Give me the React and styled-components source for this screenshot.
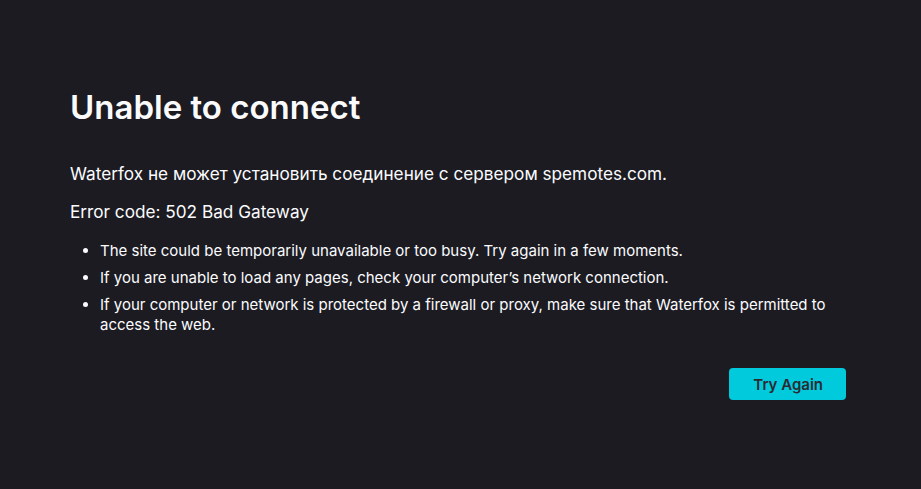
import styled, { createGlobalStyle } from 'styled-components';

const GlobalStyle = createGlobalStyle`
  html, body {
    margin: 0;
    padding: 0;
    background: #1c1b22;
    color: #fbfbfe;
    font-family: Inter, "Noto Sans", sans-serif;
  }
`;

const Page = styled.main`
  min-height: 489px;
  box-sizing: border-box;
  padding: 87px 0 0 70px;
`;

const Container = styled.div`
  width: 776px;
`;

const Title = styled.h1`
  margin: 0 0 35px;
  font-size: 33px;
  font-weight: 600;
  line-height: 40px;
`;

const Text = styled.p`
  margin: 0 0 ${(p) => p.gap || 14}px;
  font-size: 17.2px;
  line-height: 24px;
`;

const List = styled.ul`
  margin: 0;
  padding: 0 0 0 30px;
`;

const Item = styled.li`
  font-size: 15px;
  line-height: 20px;
  margin-bottom: 7px;
`;

const Actions = styled.div`
  display: flex;
  justify-content: flex-end;
  margin-top: 33px;
`;

const Button = styled.button`
  height: 32px;
  padding: 0 23px 0 24px;
  border: none;
  border-radius: 4px;
  background: #00cadb;
  color: #2b2a33;
  font-family: Inter, sans-serif;
  font-size: 15px;
  font-weight: 600;
`;

export default function App() {
  return (
    <>
      <GlobalStyle />
      <Page>
        <Container>
          <Title>Unable to connect</Title>
          <Text>Waterfox не может установить соединение с сервером spemotes.com.</Text>
          <Text gap={17}>Error code: 502 Bad Gateway</Text>
          <List>
            <Item>The site could be temporarily unavailable or too busy. Try again in a few moments.</Item>
            <Item>If you are unable to load any pages, check your computer’s network connection.</Item>
            <Item>
              If your computer or network is protected by a firewall or proxy, make sure that Waterfox is permitted to
              access the web.
            </Item>
          </List>
          <Actions>
            <Button>Try Again</Button>
          </Actions>
        </Container>
      </Page>
    </>
  );
}
